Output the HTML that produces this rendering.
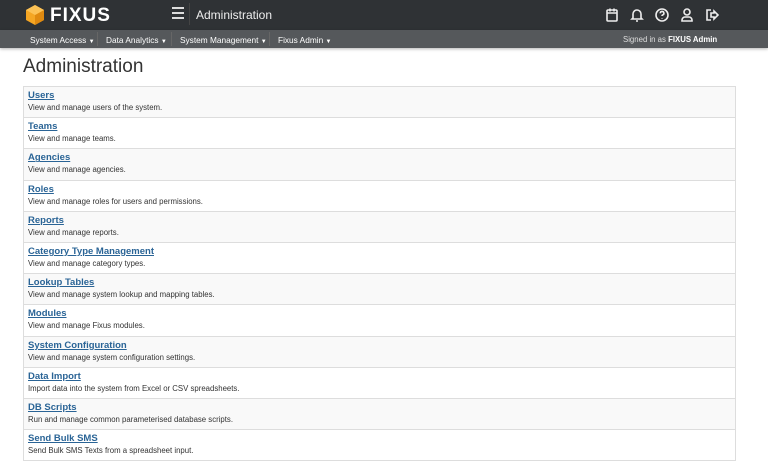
<!DOCTYPE html>
<html><head><meta charset="utf-8"><style>
*{margin:0;padding:0;box-sizing:border-box}
body{width:768px;height:473px;overflow:hidden;background:#fff;font-family:"Liberation Sans",Arial,sans-serif}
.top{height:30px;background:#2f3235;position:relative;color:#fff}
.logo{position:absolute;left:24px;top:4px}
.brand{position:absolute;left:50px;top:5px;font-size:19px;font-weight:bold;letter-spacing:1px}
.ham{position:absolute;left:172px;top:7px;width:12px}
.ham i{display:block;height:2px;background:#ddd;margin-bottom:3px}
.sep{position:absolute;left:189px;top:3px;width:1px;height:22px;background:#444}
.ttl{position:absolute;left:196px;top:8px;font-size:12px;color:#eee}
.icons{position:absolute;right:48px;top:7px;display:flex;gap:9px}
.icons svg{width:16px;height:16px;stroke:#eee;fill:none;stroke-width:1.6}
.nav{height:18px;background:#55585b;color:#fff;font-size:8.3px;position:relative;box-shadow:0 1px 3px rgba(0,0,0,.3)}
.nav span{position:absolute;top:4.5px}
.nav small{font-size:6px}
.nav .d{position:absolute;top:2px;width:1px;height:14px;background:#666}
h1{font-weight:normal;font-size:19px;color:#333;position:absolute;left:23px;top:56px}
table{position:absolute;left:23px;top:86px;width:713px;border-collapse:collapse;border:1px solid #ddd}
td{height:31.2px;border-top:1px solid #ddd;padding:3px 4px 0;vertical-align:top}
tr:nth-child(odd) td{background:#f9f9f9}
a{font-size:9.5px;font-weight:bold;color:#2a6496;text-decoration:underline;display:block;line-height:12px}
p{font-size:7.8px;color:#333;margin-top:1px}
</style></head><body>
<div class="top">
<svg class="logo" width="22" height="22" viewBox="0 0 22 22"><polygon points="11,1 20,6 20,16 11,21 2,16 2,6" fill="#f5a623"/><polygon points="11,11 20,6 20,16 11,21" fill="#e08a10"/><polygon points="11,11 2,6 11,1 20,6" fill="#fcc256"/></svg>
<div class="brand">FIXUS</div>
<div class="ham"><i></i><i></i><i></i></div>
<div class="sep"></div>
<div class="ttl">Administration</div>
<div class="icons">
<svg viewBox="0 0 16 16"><rect x="3" y="3" width="10" height="11" rx="1"/><path d="M3 6h10M6 1.5v3M10 1.5v3"/></svg>
<svg viewBox="0 0 16 16"><path d="M4 11V7a4 4 0 0 1 8 0v4l1 1H3zM7 14h2"/></svg>
<svg viewBox="0 0 16 16"><circle cx="8" cy="8" r="6"/><path d="M6.3 6.3a1.8 1.8 0 1 1 2.3 1.7c-.5.2-.6.5-.6 1M8 11v.5"/></svg>
<svg viewBox="0 0 16 16"><circle cx="8" cy="5" r="3"/><path d="M3 14v-1a3 3 0 0 1 3-3h4a3 3 0 0 1 3 3v1z"/></svg>
<svg viewBox="0 0 16 16"><path d="M7 3H3v10h4M7 6h3V4l4 4-4 4v-2H7z"/></svg>
</div>
</div>
<div class="nav">
<span style="left:30px">System Access <small>▼</small></span><div class="d" style="left:97px"></div>
<span style="left:106px">Data Analytics <small>▼</small></span><div class="d" style="left:171px"></div>
<span style="left:180px">System Management <small>▼</small></span><div class="d" style="left:269px"></div>
<span style="left:278px">Fixus Admin <small>▼</small></span>
<span style="left:623px;color:#ddd;font-size:7.8px">Signed in as <b style="color:#fff">FIXUS Admin</b></span>
</div>
<h1>Administration</h1>
<table>
<tr><td><a>Users</a><p>View and manage users of the system.</p></td></tr>
<tr><td><a>Teams</a><p>View and manage teams.</p></td></tr>
<tr><td><a>Agencies</a><p>View and manage agencies.</p></td></tr>
<tr><td><a>Roles</a><p>View and manage roles for users and permissions.</p></td></tr>
<tr><td><a>Reports</a><p>View and manage reports.</p></td></tr>
<tr><td><a>Category Type Management</a><p>View and manage category types.</p></td></tr>
<tr><td><a>Lookup Tables</a><p>View and manage system lookup and mapping tables.</p></td></tr>
<tr><td><a>Modules</a><p>View and manage Fixus modules.</p></td></tr>
<tr><td><a>System Configuration</a><p>View and manage system configuration settings.</p></td></tr>
<tr><td><a>Data Import</a><p>Import data into the system from Excel or CSV spreadsheets.</p></td></tr>
<tr><td><a>DB Scripts</a><p>Run and manage common parameterised database scripts.</p></td></tr>
<tr><td><a>Send Bulk SMS</a><p>Send Bulk SMS Texts from a spreadsheet input.</p></td></tr>
</table>
</body></html>
